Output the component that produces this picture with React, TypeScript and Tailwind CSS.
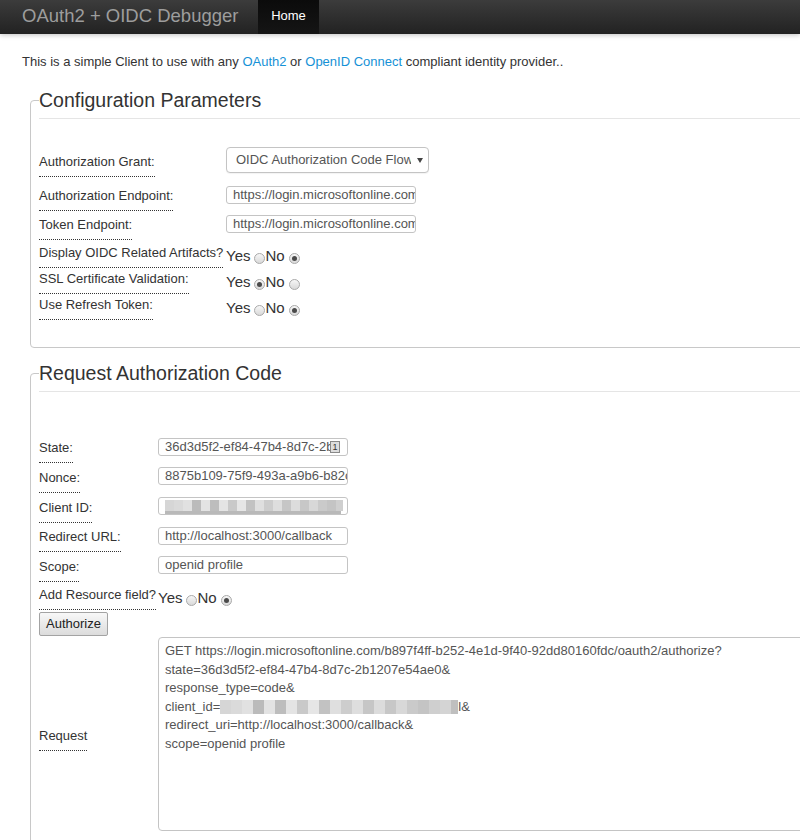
import React from 'react';

// Pixelated gray blocks used where the client id was blurred out
const blurShades = ['#d6d6d6', '#c9c9c9', '#dcdcdc', '#bfbfbf', '#e3e3e3', '#cdcdcd', '#c4c4c4', '#dadada', '#e6e6e6', '#c7c7c7', '#d2d2d2', '#bdbdbd', '#dedede', '#cfcfcf', '#e1e1e1', '#c2c2c2', '#d8d8d8', '#cbcbcb', '#e4e4e4', '#c6c6c6', '#d4d4d4', '#bbbbbb', '#dfdfdf', '#cacaca'];

const Blur = ({ width, height, cell = 10 }: { width: number; height: number; cell?: number }) => {
  const count = Math.ceil(width / cell);
  return (
    <span className="inline-flex overflow-hidden align-middle" style={{ width, height }}>
      {Array.from({ length: count }).map((_, i) => (
        <span key={i} className="shrink-0 h-full" style={{ width: cell, background: blurShades[(i * 7) % blurShades.length] }} />
      ))}
    </span>
  );
};

const Label = ({ children }: { children: React.ReactNode }) => (
  <span className="inline-block leading-5 pb-[4px] border-b border-dotted border-[#333] whitespace-nowrap">{children}</span>
);

const Radio = ({ checked }: { checked?: boolean }) => (
  <span className="relative inline-flex items-center justify-center w-[11px] h-[11px] rounded-full border border-[#a9a9a9] bg-linear-to-b from-[#f7f7f7] to-[#d9d9d9] translate-y-[2px]">
    {checked && <span className="w-[5px] h-[5px] rounded-full bg-[#4a4a4a]" />}
  </span>
);

const YesNo = ({ yes }: { yes: boolean }) => (
  <div className="flex items-center text-[15px] leading-5 mt-[3px] whitespace-nowrap">
    <span>Yes</span>
    <span className="w-[4px]" />
    <Radio checked={yes} />
    <span>No</span>
    <span className="w-[4px]" />
    <Radio checked={!yes} />
  </div>
);

const TextBox = ({ children, width = 190 }: { children: React.ReactNode; width?: number }) => (
  <div
    className="h-[18px] border border-[#c4c4c4] rounded-[3px] px-[6px] text-[13px] leading-[16px] text-[#555] whitespace-nowrap overflow-hidden"
    style={{ width }}
  >
    {children}
  </div>
);

const Legend = ({ children }: { children: React.ReactNode }) => (
  <legend className="w-full text-[19.5px] leading-[36px] text-[#333] border-b border-[#e5e5e5] p-0">{children}</legend>
);

export default function App() {
  return (
    <div className="w-[800px] h-[840px] overflow-hidden bg-white font-['Liberation_Sans',Arial,sans-serif] text-[13px] text-[#333]">
      <div className="h-[34px] flex bg-linear-to-b from-[#3c3c3c] to-[#222] shadow-[0_1px_5px_rgba(0,0,0,0.25)]">
        <div className="w-[258px] pl-[22px] text-[18.5px] leading-[32px] text-[#9d9d9d] whitespace-nowrap">OAuth2 + OIDC Debugger</div>
        <div className="w-[61px] text-center leading-[31px] text-white bg-linear-to-b from-[#0b0b0b] to-[#151515]">Home</div>
      </div>

      <div className="px-[22px]">
        <p className="mt-[18px] leading-5">
          This is a simple Client to use with any <span className="text-[#1591d6]">OAuth2</span> or{' '}
          <span className="text-[#1591d6]">OpenID Connect</span> compliant identity provider..
        </p>

        <fieldset className="mt-[10px] ml-[8px] w-[800px] border border-[#c8c8c8] rounded-[4px] pl-[8px] pb-[26px]">
          <Legend>Configuration Parameters</Legend>
          <div className="mt-[28px]">
            <div className="flex items-start h-[39px]">
              <div className="w-[187px] shrink-0 mt-[5px]"><Label>Authorization Grant:</Label></div>
              <div className="w-[203px] h-[26px] flex items-center border border-[#c4c4c4] rounded-[4px] pl-[9px] text-[#555] bg-white shadow-[0_1px_1px_rgba(0,0,0,0.05)]">
                <span className="flex-1 overflow-hidden whitespace-nowrap">OIDC Authorization Code Flow</span>
                <span className="w-[17px] flex justify-center">
                  <svg width="6" height="5" viewBox="0 0 6 5"><path d="M0 0h6L3 5z" fill="#444" /></svg>
                </span>
              </div>
            </div>
            <div className="flex items-start h-[29px]">
              <div className="w-[187px] shrink-0"><Label>Authorization Endpoint:</Label></div>
              <TextBox>https://login.microsoftonline.com</TextBox>
            </div>
            <div className="flex items-start h-[28px]">
              <div className="w-[187px] shrink-0"><Label>Token Endpoint:</Label></div>
              <TextBox>https://login.microsoftonline.com</TextBox>
            </div>
            <div className="flex items-start h-[26px]">
              <div className="w-[187px] shrink-0"><Label>Display OIDC Related Artifacts?</Label></div>
              <YesNo yes={false} />
            </div>
            <div className="flex items-start h-[26px]">
              <div className="w-[187px] shrink-0"><Label>SSL Certificate Validation:</Label></div>
              <YesNo yes={true} />
            </div>
            <div className="flex items-start h-[26px]">
              <div className="w-[187px] shrink-0"><Label>Use Refresh Token:</Label></div>
              <YesNo yes={false} />
            </div>
          </div>
        </fieldset>

        <fieldset className="mt-[7px] ml-[8px] w-[800px] border border-[#c8c8c8] rounded-[4px] pl-[8px] pb-[20px]">
          <Legend>Request Authorization Code</Legend>
          <div className="mt-[46px]">
            <div className="flex items-start h-[30px]">
              <div className="w-[119px] shrink-0"><Label>State:</Label></div>
              <div className="w-[190px] h-[18px] flex items-center border border-[#c4c4c4] rounded-[3px] pl-[6px] pr-[6px] text-[13px] leading-[16px] text-[#555] overflow-hidden">
                <span className="w-[167px] shrink-0 overflow-hidden whitespace-nowrap">36d3d5f2-ef84-47b4-8d7c-2b1207e54ae0</span>
                <span className="-ml-[2px] w-[10px] h-[12px] border border-[#888] bg-[#ddd] text-[9px] leading-[10px] text-center text-[#333]">1</span>
              </div>
            </div>
            <div className="flex items-start h-[30px]">
              <div className="w-[119px] shrink-0"><Label>Nonce:</Label></div>
              <div className="-mt-[1px]"><TextBox>8875b109-75f9-493a-a9b6-b82c4e2d1f07</TextBox></div>
            </div>
            <div className="flex items-start h-[29px]">
              <div className="w-[119px] shrink-0"><Label>Client ID:</Label></div>
              <div className="-mt-[1px] w-[190px] h-[18px] border border-[#c4c4c4] rounded-[3px] px-[6px] overflow-hidden flex flex-col pt-[2px]">
                <Blur width={178} height={11} cell={9} />
                <span className="h-[3px] bg-[#8a8a8a] opacity-60" />
              </div>
            </div>
            <div className="flex items-start h-[30px]">
              <div className="w-[119px] shrink-0"><Label>Redirect URL:</Label></div>
              <TextBox>http://localhost:3000/callback</TextBox>
            </div>
            <div className="flex items-start h-[28px]">
              <div className="w-[119px] shrink-0"><Label>Scope:</Label></div>
              <div className="-mt-[1px]"><TextBox>openid profile</TextBox></div>
            </div>
            <div className="flex items-start h-[27px]">
              <div className="w-[119px] shrink-0"><Label>Add Resource field?</Label></div>
              <YesNo yes={false} />
            </div>
            <button className="w-[69px] h-[24px] border border-[#a3a3a3] rounded-[2px] bg-linear-to-b from-[#f8f8f8] to-[#dcdcdc] text-[13px] text-[#222] leading-[20px]">
              Authorize
            </button>
            <div className="flex items-start mt-[1px]">
              <div className="w-[119px] shrink-0 mt-[89px]"><Label>Request</Label></div>
              <div className="w-[700px] h-[194px] border border-[#c4c4c4] rounded-[4px] pl-[6px] pt-[4px] text-[13px] leading-[18.6px] text-[#555] whitespace-pre">
                <div>GET https://login.microsoftonline.com/b897f4ff-b252-4e1d-9f40-92dd80160fdc/oauth2/authorize?</div>
                <div>state=36d3d5f2-ef84-47b4-8d7c-2b1207e54ae0&amp;</div>
                <div>response_type=code&amp;</div>
                <div className="flex items-center">
                  <span>client_id=</span>
                  <Blur width={238} height={14} cell={11} />
                  <span>l&amp;</span>
                </div>
                <div>redirect_uri=http://localhost:3000/callback&amp;</div>
                <div>scope=openid profile</div>
              </div>
            </div>
          </div>
        </fieldset>
      </div>
    </div>
  );
}
